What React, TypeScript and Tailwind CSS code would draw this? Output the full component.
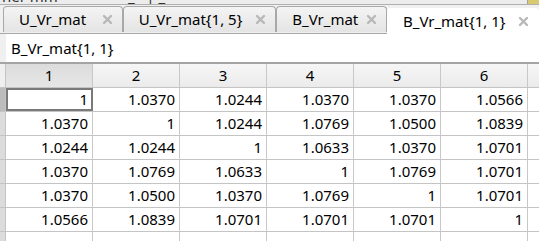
import React from "react"

const rows = [
  ["1", "1.0370", "1.0244", "1.0370", "1.0370", "1.0566"],
  ["1.0370", "1", "1.0244", "1.0769", "1.0500", "1.0839"],
  ["1.0244", "1.0244", "1", "1.0633", "1.0370", "1.0701"],
  ["1.0370", "1.0769", "1.0633", "1", "1.0769", "1.0701"],
  ["1.0370", "1.0500", "1.0370", "1.0769", "1", "1.0701"],
  ["1.0566", "1.0839", "1.0701", "1.0701", "1.0701", "1"],
]

const CloseX = () => (
  <svg width="11" height="11" viewBox="0 0 11 11" className="shrink-0">
    <path d="M2 2 L9 9 M9 2 L2 9" stroke="#b8b8b8" strokeWidth="2.4" strokeLinecap="round" />
  </svg>
)

const Tab = ({ label, width, active }: { label: string; width: string; active?: boolean }) => (
  <div
    className={`${width} h-[26px] flex items-center justify-between pl-[15px] pr-[9px] rounded-t-[4px] border border-b-0 ${
      active ? "bg-white border-white" : "bg-gradient-to-b from-[#f4f4f4] to-[#e4e4e4] border-[#a8a8a8] mb-[1px] h-[25px]"
    }`}
  >
    <span className="text-[15px] text-black whitespace-nowrap">{label}</span>
    <CloseX />
  </div>
)

export default function App() {
  return (
    <div className="w-[539px] h-[241px] overflow-hidden bg-white" style={{ fontFamily: "'Noto Sans', sans-serif" }}>
      {/* cut-off strip above the tabs */}
      <div className="h-[5px] bg-[#ececec] border-b border-[#b0b0b0] overflow-hidden flex">
        <span className="-mt-[15px] ml-[2px] text-[15px] text-[#333] whitespace-nowrap">ner mm</span>
        <span className="-mt-[15px] ml-[70px] text-[15px] text-[#333] whitespace-nowrap">_ &nbsp; | _</span>
        <div className="ml-auto w-[12px] h-full border-l border-[#a0a0a0] bg-[#d8c870]" />
      </div>

      {/* tab bar */}
      <div className="h-[29px] bg-[#f0f0f0] flex items-end pl-[3px] border-b border-[#a8a8a8]">
        <Tab label="U_Vr_mat" width="w-[120px]" />
        <Tab label="U_Vr_mat{1, 5}" width="w-[154px]" />
        <Tab label="B_Vr_mat" width="w-[111px]" />
        <div className="-mb-[1px]">
          <Tab label="B_Vr_mat{1, 1}" width="w-[152px]" active />
        </div>
      </div>

      {/* variable label */}
      <div className="h-[28px] flex">
        <div className="w-[6px] bg-[#f0f0f0]" />
        <div className="pl-[5px] flex items-center text-[15px] text-black">B_Vr_mat{"{1, 1}"}</div>
      </div>

      {/* grid */}
      <div className="border-t-2 border-[#a4a4a4] text-[15px] text-black">
        <div className="flex h-[24px] border-b border-[#c4c4c4]">
          <div className="w-[6px] shrink-0 bg-[#f0f0f0] border-r border-[#c4c4c4]" />
          {[1, 2, 3, 4, 5, 6].map((n) => (
            <div
              key={n}
              className={`w-[87px] shrink-0 border-r border-[#c8c8c8] flex items-center justify-center bg-gradient-to-b ${
                n === 1 ? "from-[#dcdcdc] to-[#e6e6e6]" : "from-[#f6f6f6] to-[#ebebeb]"
              }`}
            >
              {n}
            </div>
          ))}
          <div className="flex-1 bg-gradient-to-b from-[#f6f6f6] to-[#ebebeb]" />
        </div>

        {rows.map((r, i) => (
          <div key={i} className="flex h-[24px] border-b border-[#c4c4c4]">
            <div className={`w-[6px] shrink-0 border-r border-[#c4c4c4] ${i === 0 ? "bg-[#bcbcbc]" : "bg-[#dcdcdc]"}`} />
            {r.map((v, j) => (
              <div
                key={j}
                className={`w-[87px] shrink-0 border-r border-[#c8c8c8] flex items-center justify-end pr-[4px] ${
                  i === 0 && j === 0 ? "outline-2 outline-[#7a7a7a] -outline-offset-2" : ""
                }`}
              >
                {v}
              </div>
            ))}
            <div className="flex-1" />
          </div>
        ))}

        <div className="flex h-[24px]">
          <div className="w-[6px] shrink-0 bg-[#dcdcdc] border-r border-[#c4c4c4]" />
          {[1, 2, 3, 4, 5, 6].map((n) => (
            <div key={n} className="w-[87px] shrink-0 border-r border-[#c8c8c8]" />
          ))}
        </div>
      </div>
    </div>
  )
}
